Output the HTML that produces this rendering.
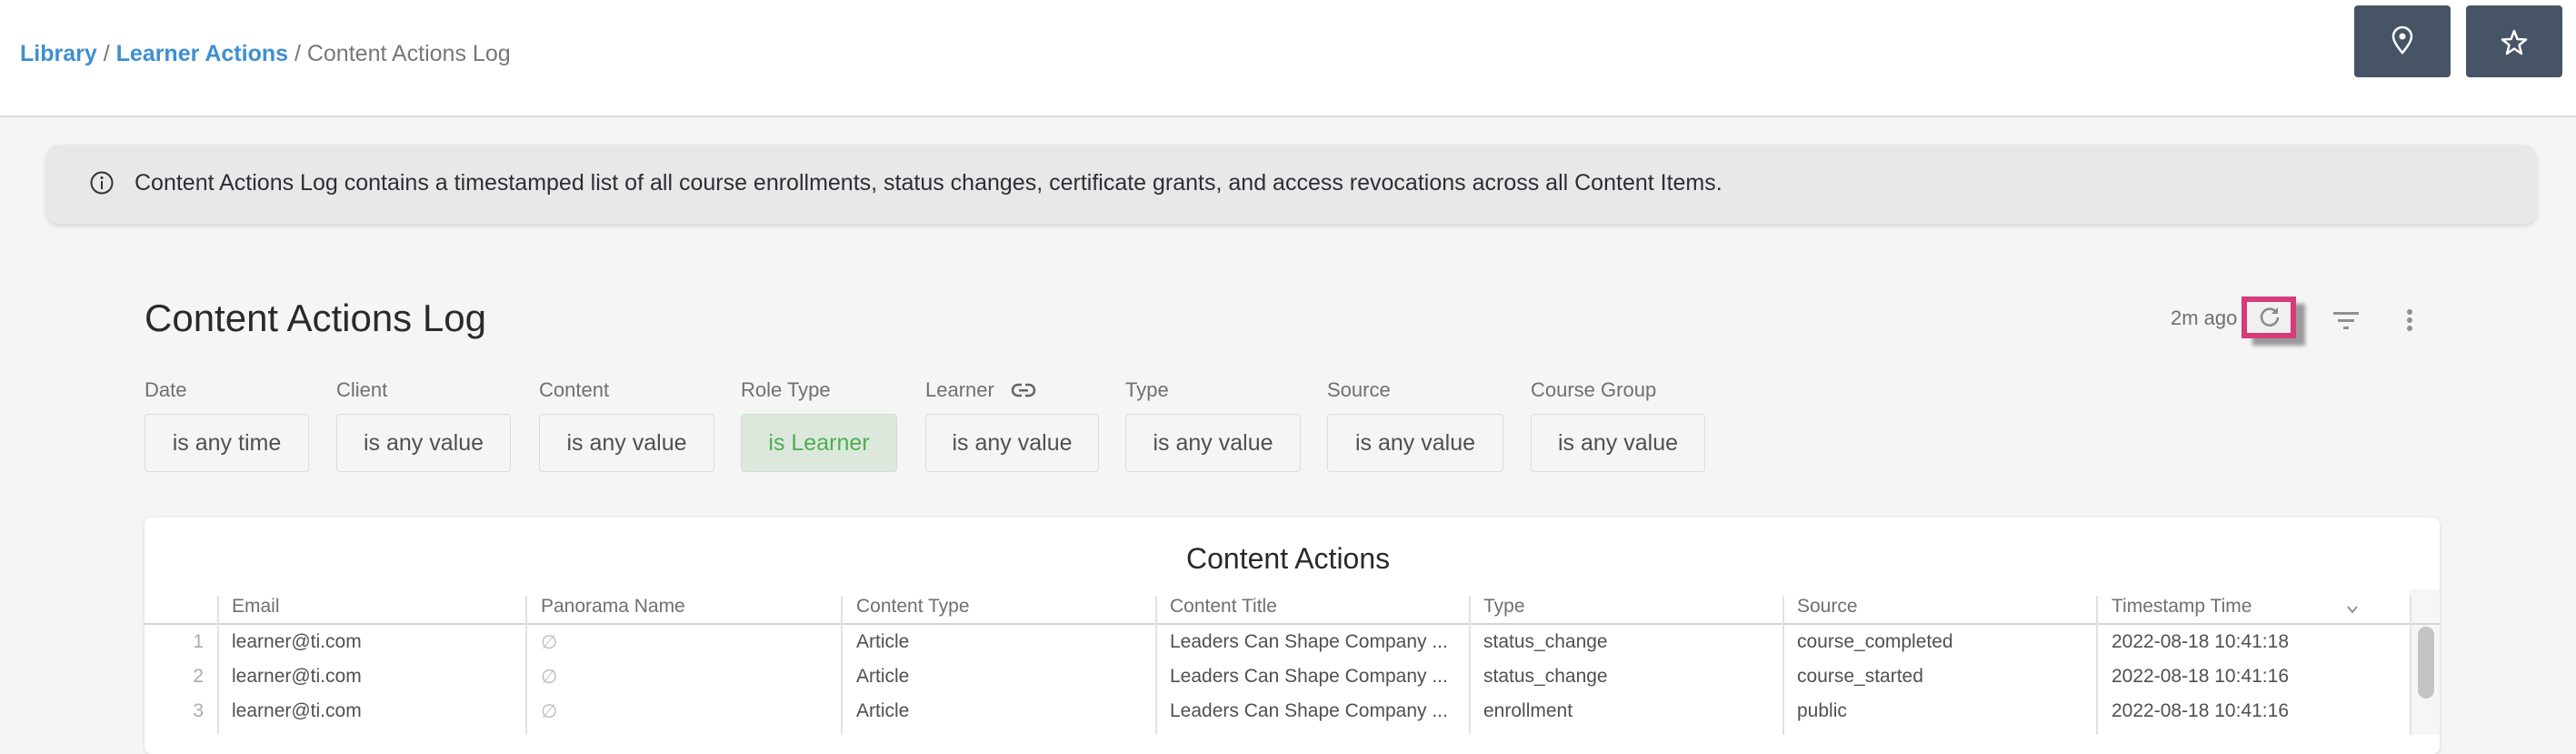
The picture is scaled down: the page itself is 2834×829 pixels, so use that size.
<!DOCTYPE html>
<html><head><meta charset="utf-8"><style>
*{margin:0;padding:0;box-sizing:border-box}
body{width:2834px;height:808px;overflow:hidden;background:#f5f5f5;font-family:"Liberation Sans",sans-serif;position:relative}
.a{position:absolute;white-space:nowrap}
.hdr{position:absolute;left:0;top:0;width:2834px;height:129px;background:#fff;border-bottom:2px solid #d8dde3}
.btn{position:absolute;top:6px;width:106px;height:79px;background:#465466;border-radius:4px}
.lab{position:absolute;top:416px;font-size:22px;color:#707070}
.box{position:absolute;top:455px;height:64px;border:1.5px solid #dcdcdc;border-radius:4px;background:#f5f5f5;font-size:25px;color:#505050;display:flex;align-items:center;justify-content:center}
.th{position:absolute;top:655px;font-size:21px;color:#707070}
.sep{position:absolute;top:655px;width:1.5px;height:153px;background:#e2e2e2}
.td{position:absolute;font-size:21px;color:#505050}
.rn{position:absolute;font-size:21px;color:#aaa;text-align:right;width:30px;left:194px}
</style></head><body>
<div class="hdr"></div>
<div class="a" style="left:22px;top:45px;font-size:25px;color:#777"><b style="color:#3f8fd0">Library</b> / <b style="color:#3f8fd0">Learner Actions</b> / Content Actions Log</div>
<div class="btn" style="left:2590px"><svg width="106" height="79" viewBox="0 0 106 79"><path d="M53 52 C47 45 43 39 43 34 A10 10 0 0 1 63 34 C63 39 59 45 53 52Z" fill="none" stroke="#fff" stroke-width="2.5"/><circle cx="53" cy="34" r="3.5" fill="#fff"/></svg></div>
<div class="btn" style="left:2713px"><svg width="106" height="79" viewBox="0 0 106 79"><path d="M53 28 L56.5 37 L66 37.5 L58.5 43.5 L61 53 L53 47.5 L45 53 L47.5 43.5 L40 37.5 L49.5 37Z" fill="none" stroke="#fff" stroke-width="2.5" stroke-linejoin="round"/></svg></div>

<div class="a" style="left:51px;top:159px;width:2740px;height:87px;background:#e8e8e8;border-radius:14px;box-shadow:0 3px 6px rgba(0,0,0,.12)"></div>
<svg class="a" style="left:98px;top:187px" width="28" height="28" viewBox="0 0 28 28"><circle cx="14" cy="14" r="11.5" fill="none" stroke="#333" stroke-width="2"/><circle cx="14" cy="8.5" r="1.5" fill="#333"/><rect x="13" y="12" width="2" height="9" fill="#333"/></svg>
<div class="a" style="left:148px;top:187px;font-size:25px;color:#2a2f36">Content Actions Log contains a timestamped list of all course enrollments, status changes, certificate grants, and access revocations across all Content Items.</div>

<div class="a" style="left:159px;top:326px;font-size:42px;color:#2a2a2a">Content Actions Log</div>
<div class="a" style="left:2388px;top:337px;font-size:22px;color:#707070">2m ago</div>
<div class="a" style="left:2478px;top:334px;width:58px;height:46px;background:#999;filter:blur(2px)"></div>
<div class="a" style="left:2466px;top:326px;width:60px;height:46px;border:6px solid #d63b7a;background:#f0f0f0"></div>
<svg class="a" style="left:2482px;top:333px" width="30" height="30" viewBox="0 0 30 30"><path d="M22 10 A9 9 0 1 0 24 16" fill="none" stroke="#888" stroke-width="2.5"/><path d="M24 5 L24 12 L17 12Z" fill="#888"/></svg>
<div class="a" style="left:2567px;top:343px;width:28px;height:3px;background:#909090"></div>
<div class="a" style="left:2572px;top:351px;width:18px;height:3px;background:#909090"></div>
<div class="a" style="left:2578px;top:359px;width:6px;height:3px;background:#909090"></div>
<div class="a" style="left:2648px;top:340px;width:6px;height:6px;border-radius:50%;background:#909090"></div>
<div class="a" style="left:2648px;top:349px;width:6px;height:6px;border-radius:50%;background:#909090"></div>
<div class="a" style="left:2648px;top:358px;width:6px;height:6px;border-radius:50%;background:#909090"></div>

<div class="lab" style="left:159px">Date</div>
<div class="lab" style="left:370px">Client</div>
<div class="lab" style="left:593px">Content</div>
<div class="lab" style="left:815px">Role Type</div>
<div class="lab" style="left:1018px">Learner</div>
<svg class="a" style="left:1112px;top:421px" width="28" height="16" viewBox="0 0 28 16"><rect x="2" y="2" width="24" height="12" rx="6" fill="none" stroke="#666" stroke-width="2.5"/><rect x="9" y="7" width="10" height="2.5" fill="#666"/><rect x="12" y="0" width="4" height="5" fill="#f5f5f5"/><rect x="12" y="11" width="4" height="5" fill="#f5f5f5"/></svg>
<div class="lab" style="left:1238px">Type</div>
<div class="lab" style="left:1460px">Source</div>
<div class="lab" style="left:1684px">Course Group</div>
<div class="box" style="left:159px;width:181px">is any time</div>
<div class="box" style="left:370px;width:192px">is any value</div>
<div class="box" style="left:593px;width:193px">is any value</div>
<div class="box" style="left:815px;width:172px;background:#dce8dc;border-color:#cfe0cf;color:#4caf50">is Learner</div>
<div class="box" style="left:1018px;width:191px">is any value</div>
<div class="box" style="left:1238px;width:193px">is any value</div>
<div class="box" style="left:1460px;width:194px">is any value</div>
<div class="box" style="left:1684px;width:192px">is any value</div>

<div class="a" style="left:159px;top:569px;width:2525px;height:260px;background:#fff;border-radius:8px;box-shadow:0 1px 5px rgba(0,0,0,.12)"></div>
<div class="a" style="left:1305px;top:596px;font-size:32px;color:#2a2a2a">Content Actions</div>
<div class="a" style="left:2651px;top:648px;width:33px;height:160px;background:#f6f6f6"></div>
<div class="a" style="left:2660px;top:689px;width:18px;height:79px;border-radius:9px;background:#c4c4c4"></div>
<div class="a" style="left:159px;top:685px;width:2525px;height:2px;background:#d4d4d4"></div>
<div class="sep" style="left:239px"></div><div class="sep" style="left:578px"></div><div class="sep" style="left:925px"></div><div class="sep" style="left:1271px"></div><div class="sep" style="left:1616px"></div><div class="sep" style="left:1961px"></div><div class="sep" style="left:2306px"></div><div class="sep" style="left:2651px"></div>
<div class="th" style="left:255px">Email</div>
<div class="th" style="left:595px">Panorama Name</div>
<div class="th" style="left:942px">Content Type</div>
<div class="th" style="left:1287px">Content Title</div>
<div class="th" style="left:1632px">Type</div>
<div class="th" style="left:1977px">Source</div>
<div class="th" style="left:2323px">Timestamp Time</div>
<svg class="a" style="left:2580px;top:664px" width="16" height="12" viewBox="0 0 16 12"><path d="M3 3 L8 9 L13 3" fill="none" stroke="#888" stroke-width="1.8"/></svg>

<div class="rn" style="top:694px">1</div><div class="rn" style="top:732px">2</div><div class="rn" style="top:770px">3</div>
<div class="td" style="left:255px;top:694px">learner@ti.com</div><div class="td" style="left:255px;top:732px">learner@ti.com</div><div class="td" style="left:255px;top:770px">learner@ti.com</div>
<div class="td" style="left:595px;top:694px;color:#bbb">∅</div><div class="td" style="left:595px;top:732px;color:#bbb">∅</div><div class="td" style="left:595px;top:770px;color:#bbb">∅</div>
<div class="td" style="left:942px;top:694px">Article</div><div class="td" style="left:942px;top:732px">Article</div><div class="td" style="left:942px;top:770px">Article</div>
<div class="td" style="left:1287px;top:694px">Leaders Can Shape Company ...</div><div class="td" style="left:1287px;top:732px">Leaders Can Shape Company ...</div><div class="td" style="left:1287px;top:770px">Leaders Can Shape Company ...</div>
<div class="td" style="left:1632px;top:694px">status_change</div><div class="td" style="left:1632px;top:732px">status_change</div><div class="td" style="left:1632px;top:770px">enrollment</div>
<div class="td" style="left:1977px;top:694px">course_completed</div><div class="td" style="left:1977px;top:732px">course_started</div><div class="td" style="left:1977px;top:770px">public</div>
<div class="td" style="left:2323px;top:694px">2022-08-18 10:41:18</div><div class="td" style="left:2323px;top:732px">2022-08-18 10:41:16</div><div class="td" style="left:2323px;top:770px">2022-08-18 10:41:16</div>
</body></html>
